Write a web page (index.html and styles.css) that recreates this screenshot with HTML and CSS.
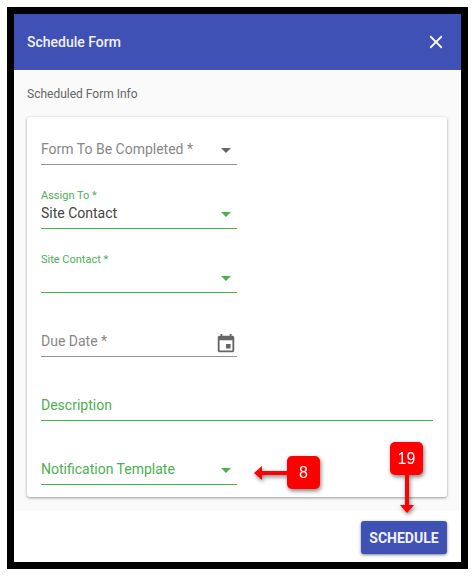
FILE: index.html
```html
<!DOCTYPE html>
<html lang="en">
<head>
    <meta charset="UTF-8">
    <meta name="viewport" content="width=device-width, initial-scale=1.0">
    <title>Schedule Form</title>
    <link rel="stylesheet" href="styles.css">
</head>
<body>
    <form class="dialog">
        <header class="dialog-header">
            <h1>Schedule Form</h1>
            <button type="button" class="icon-button" aria-label="Close">
                <svg width="22" height="22" viewBox="0 0 24 24" fill="#fff"><path d="M19 6.41L17.59 5 12 10.59 6.41 5 5 6.41 10.59 12 5 17.59 6.41 19 12 13.41 17.59 19 19 17.59 13.41 12z"/></svg>
            </button>
        </header>

        <div class="dialog-content">
            <h2>Scheduled Form Info</h2>
            <div class="card">
                <div class="field">
                    <label class="resting" for="form">Form To Be Completed *</label>
                    <select id="form" required><option></option></select>
                    <svg class="arrow" width="10" height="5" viewBox="0 0 10 5"><path d="M0 0h10L5 5z"/></svg>
                </div>

                <div class="field active">
                    <label for="assign">Assign To *</label>
                    <select id="assign" required><option>Site Contact</option></select>
                    <svg class="arrow" width="10" height="5" viewBox="0 0 10 5"><path d="M0 0h10L5 5z"/></svg>
                </div>

                <div class="field active">
                    <label for="contact">Site Contact *</label>
                    <select id="contact" required><option></option></select>
                    <svg class="arrow" width="10" height="5" viewBox="0 0 10 5"><path d="M0 0h10L5 5z"/></svg>
                </div>

                <div class="field">
                    <label class="resting" for="due">Due Date *</label>
                    <input type="text" id="due" required>
                    <button type="button" class="icon-button calendar" aria-label="Open calendar">
                        <svg width="22" height="22" viewBox="0 0 24 24" fill="#666"><path d="M17 12h-5v5h5v-5zM16 1v2H8V1H6v2H5c-1.11 0-1.99.9-1.99 2L3 19c0 1.1.89 2 2 2h14c1.1 0 2-.9 2-2V5c0-1.1-.9-2-2-2h-1V1h-2zm3 18H5V8h14v11z"/></svg>
                    </button>
                </div>

                <div class="field active wide">
                    <label class="resting" for="description">Description</label>
                    <input type="text" id="description">
                </div>

                <div class="field active">
                    <label class="resting" for="template">Notification Template</label>
                    <select id="template"><option></option></select>
                    <svg class="arrow" width="10" height="5" viewBox="0 0 10 5"><path d="M0 0h10L5 5z"/></svg>
                    <div class="callout callout-left">
                        <svg width="33" height="14" viewBox="0 0 33 14"><path d="M0 7l8-7v5h25v4H8v5z"/></svg>
                        <span class="badge">8</span>
                    </div>
                </div>
            </div>
        </div>

        <footer class="dialog-actions">
            <div class="submit">
                <button type="submit" class="button">SCHEDULE</button>
                <div class="callout callout-down">
                    <span class="badge">19</span>
                    <svg width="14" height="38" viewBox="0 0 14 38"><path d="M5 0h4v30h5l-7 8-7-8h5z"/></svg>
                </div>
            </div>
        </footer>
    </form>
</body>
</html>
```
FILE: styles.css
```css
* {
    box-sizing: border-box;
}
body {
    margin: 7px 6px 7px 7px;
    background-color: #fff;
    font-family: Roboto, Arial, sans-serif;
}
.dialog {
    border: 7px solid #000;
    box-shadow: 0 2px 6px 1px rgba(0, 0, 0, 0.7);
}
.dialog-header {
    display: flex;
    align-items: center;
    justify-content: space-between;
    height: 56px;
    padding: 0 14px 0 13px;
    background-color: #3f51b5;
    color: #f0f2ff;
}
h1 {
    margin: 0;
    font-size: 14px;
    font-weight: 500;
}
.icon-button {
    display: flex;
    padding: 0;
    border: none;
    background: none;
    cursor: pointer;
}
.dialog-content {
    padding: 16px 14px 14px 13px;
    background-color: #fafafa;
}
h2 {
    margin: 0 0 15px;
    color: #666;
    font-size: 12px;
    font-weight: 400;
    line-height: 16px;
}
.card {
    display: flex;
    flex-direction: column;
    gap: 22px;
    padding: 6px 14px 12px;
    border-radius: 3px;
    background-color: #fff;
    box-shadow: 0 1px 3px rgba(0, 0, 0, 0.4);
}

/* label row on top, control row below */
.field {
    --accent: #4caf50;
    display: grid;
    grid-template-rows: 16px 26px;
    position: relative;
    width: 50%;
}
.field.wide {
    width: 100%;
}
.field label {
    grid-area: 1 / 1;
    color: var(--accent);
    font-size: 11px;
    line-height: 18px;
}
.field label.resting {
    grid-area: 2 / 1;
    color: #888;
    font-size: 14px;
    line-height: 20px;
    pointer-events: none;
}
.field.active label.resting {
    color: var(--accent);
}
.field input,
.field select {
    grid-area: 2 / 1;
    width: 100%;
    padding: 0 0 5px;
    border: none;
    border-bottom: 1px solid #949494;
    border-radius: 0;
    outline: none;
    background: none;
    color: #444;
    font-family: inherit;
    font-size: 14px;
    appearance: none;
}
.field.active input,
.field.active select {
    border-bottom-color: var(--accent);
}
.arrow {
    grid-area: 2 / 1;
    justify-self: end;
    margin: 9px 6px 0 0;
    fill: #666;
    pointer-events: none;
}
.active .arrow {
    fill: var(--accent);
}
.calendar {
    grid-area: 2 / 1;
    align-self: center;
    justify-self: end;
}

.dialog-actions {
    display: flex;
    justify-content: flex-end;
    padding: 10px 14px 8px;
    background-color: #fff;
}
.submit {
    position: relative;
}
.button {
    display: block;
    min-width: 86px;
    height: 33px;
    padding: 0 8px;
    border: none;
    border-radius: 3px;
    background-color: #3f51b5;
    box-shadow: 0 1px 3px rgba(0, 0, 0, 0.5);
    color: #f0f2ff;
    font-family: inherit;
    font-size: 14px;
    font-weight: 700;
    cursor: pointer;
}

/* numbered callouts */
.callout {
    display: flex;
    align-items: center;
    position: absolute;
    fill: #f00;
    filter: drop-shadow(1px 2px 2px rgba(0, 0, 0, 0.5));
}
.callout-left {
    left: calc(100% + 17px);
    bottom: -4px;
}
.callout-down {
    flex-direction: column;
    right: 24px;
    bottom: calc(100% + 8px);
}
.badge {
    width: 33px;
    border-radius: 5px;
    background-color: #f00;
    color: #fff;
    font-family: "Liberation Sans", Arial, sans-serif;
    font-size: 16px;
    line-height: 33px;
    text-align: center;
}
```
